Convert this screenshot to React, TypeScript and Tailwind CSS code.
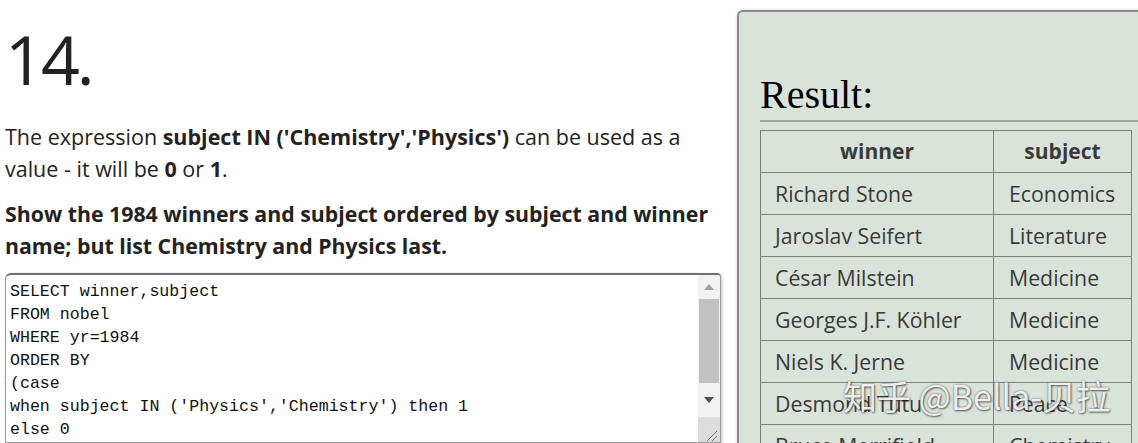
import React from "react";

const rows: [string, string][] = [
  ["Richard Stone", "Economics"],
  ["Jaroslav Seifert", "Literature"],
  ["César Milstein", "Medicine"],
  ["Georges J.F. Köhler", "Medicine"],
  ["Niels K. Jerne", "Medicine"],
  ["Desmond Tutu", "Peace"],
  ["Bruce Merrifield", "Chemistry"],
];

const code = `SELECT winner,subject
FROM nobel
WHERE yr=1984
ORDER BY
(case
when subject IN ('Physics','Chemistry') then 1
else 0
end),subject,winner`;

export default function App() {
  return (
    <div className="relative w-[1138px] h-[443px] overflow-hidden bg-white flex text-[#222]" style={{ fontFamily: '"Open Sans", sans-serif' }}>
      <div className="w-[721px] shrink-0 pl-[5px] flex flex-col">
        <div className="mt-[23px] h-[72px] text-[68px] leading-[72px] font-normal tracking-[-3px] text-[#222]">14.</div>
        <p className="mt-[26px] text-[21.5px] leading-[32px] text-[#222]">
          The expression <b>subject IN ('Chemistry','Physics')</b> can be used as a value - it will be <b>0</b> or <b>1</b>.
        </p>
        <p className="mt-[13px] text-[21.3px] leading-[32px] font-bold text-[#222] pr-[4px]">
          Show the 1984 winners and subject ordered by subject and winner name; but list Chemistry and Physics last.
        </p>
        <div className="mt-[11px] h-[172px] flex border border-[#9a9a9a] border-t-[#707070] border-t-2 rounded-tl-[6px] rounded-tr-[4px] shadow-[1px_1px_3px_rgba(0,0,0,0.25)] bg-white overflow-hidden">
          <pre className="flex-1 pl-[4px] pt-[5px] text-[16.6px] leading-[23px] text-[#111] overflow-hidden" style={{ fontFamily: '"Liberation Mono", monospace' }}>{code}</pre>
          <div className="w-[22px] shrink-0 bg-[#f1f1f1] flex flex-col">
            <div className="h-[24px] flex items-center justify-center">
              <svg width="10" height="6" viewBox="0 0 10 6"><path d="M0 6 L5 0 L10 6 Z" fill="#a3a3a3" /></svg>
            </div>
            <div className="h-[84px] bg-[#c1c1c1] mx-[1px]" />
            <div className="h-[34px] flex items-center justify-center">
              <svg width="10" height="6" viewBox="0 0 10 6"><path d="M0 0 L10 0 L5 6 Z" fill="#505050" /></svg>
            </div>
            <div className="flex-1 bg-[#dcdcdc] relative">
              <svg className="absolute right-[2px] bottom-[0px]" width="14" height="14" viewBox="0 0 14 14">
                <path d="M13 3 L3 13 M13 8 L8 13" stroke="#777" strokeWidth="1" />
              </svg>
            </div>
          </div>
        </div>
      </div>
      <div className="ml-[16px] mt-[10px] w-[430px] shrink-0 h-[460px] border-l-2 border-t-2 border-[#8c8c8c] rounded-tl-[6px] bg-[#d9e3d9] shadow-[0_0_3px_rgba(0,0,0,0.2)] pl-[21px]">
        <h2 className="mt-[61px] text-[40px] leading-[44px] text-black" style={{ fontFamily: '"Liberation Serif", serif' }}>Result:</h2>
        <div className="mt-[3px] h-[2px] bg-[#a0a7a0]" />
        <table className="mt-[8px] border-collapse text-[21.3px] text-[#3a3a3a]">
          <thead>
            <tr className="h-[42px]">
              <th className="w-[233px] border border-[#7a807a] font-bold text-center text-[21px]">winner</th>
              <th className="w-[138px] border border-[#7a807a] font-bold text-center text-[21px]">subject</th>
            </tr>
          </thead>
          <tbody>
            {rows.map(([w, s]) => (
              <tr key={w} className="h-[42px]">
                <td className="border border-[#7a807a] pl-[14px] whitespace-nowrap">{w}</td>
                <td className="border border-[#7a807a] pl-[15px] whitespace-nowrap">{s}</td>
              </tr>
            ))}
          </tbody>
        </table>
      </div>
      <div
        className="absolute left-[843px] top-[374px] text-[34px] leading-[44px] text-white/90 whitespace-nowrap"
        style={{ fontFamily: '"Noto Sans CJK SC", "Noto Sans", sans-serif', textShadow: "0 0 2px rgba(0,0,0,0.6), 1px 1px 2px rgba(0,0,0,0.5)" }}
      >
        知乎 @Bella-贝拉
      </div>
    </div>
  );
}
